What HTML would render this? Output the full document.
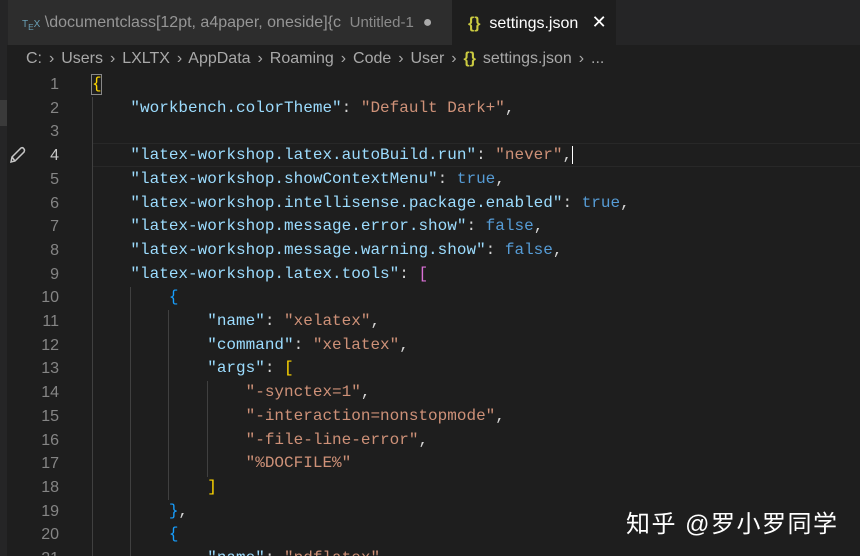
<!DOCTYPE html>
<html><head><meta charset="utf-8"><style>
*{margin:0;padding:0;box-sizing:border-box}
html,body{width:860px;height:556px;overflow:hidden}
body{background:#1e1e1e;position:relative;font-family:"Liberation Sans",sans-serif}
.tabs{position:absolute;left:0;top:0;width:860px;height:45px;background:#252526}
.t1{position:absolute;left:8px;top:0;width:444px;height:45px;background:#2d2d2d;color:#969696;font-size:16px;line-height:45px;padding-left:14px;white-space:nowrap}
.t2{position:absolute;left:452px;top:0;width:164px;height:45px;background:#1e1e1e;color:#fff;font-size:16px;line-height:45px;padding-left:16px;white-space:nowrap}
.bc{position:absolute;left:26px;top:48px;height:22px;color:#a9a9a9;font-size:16px;line-height:22px;white-space:nowrap;word-spacing:2.5px}
.y{color:#cbcb41;font-weight:bold}
.strip{position:absolute;left:0;top:45px;width:7px;height:511px;background:#252526}
.strip2{position:absolute;left:0;top:100px;width:7px;height:26px;background:#3a3a3a}
.code{position:absolute;left:0;top:73px;width:860px;height:483px;overflow:hidden;font-family:"Liberation Mono",monospace;font-size:16px;line-height:23.7px}
.ln{position:absolute;left:0;width:59px;text-align:right;color:#858585;font-family:"Liberation Sans",sans-serif;font-size:16px}
.tx{position:absolute;left:92px;top:0;color:#d4d4d4;white-space:pre}
.k{color:#9cdcfe}.s{color:#ce9178}.b{color:#569cd6}.g{color:#ffd700}.p{color:#da70d6}.bl{color:#179fff}
.cur{position:absolute;left:92px;top:143px;width:768px;height:24px;border-top:1px solid #282828;border-bottom:1px solid #282828}
.guide{position:absolute;width:1px;background:#404040}
.wm{position:absolute;left:626px;top:504px;color:#fff;font-family:"Liberation Sans","Noto Sans CJK SC",sans-serif;font-size:24px;letter-spacing:1.5px;white-space:nowrap}
</style></head><body>
<div class="tabs">
<div class="t1"><span style="font-size:10px;color:#6a9fb5">T<sub>E</sub>X</span> \documentclass[12pt, a4paper, oneside]{c <span style="color:#8a8a8a;font-size:15px">&nbsp;Untitled-1</span> <span style="color:#aaa">&nbsp;●</span></div>
<div class="t2"><span class="y">{}</span>&nbsp; settings.json&nbsp;&nbsp; <span style="font-size:18px">✕</span></div>
</div>
<div class="bc">C: › Users › LXLTX › AppData › Roaming › Code › User › <span class="y">{}</span> settings.json › ...</div>
<div class="strip"></div><div class="strip2"></div>
<div class="cur"></div>
<div class="guide" style="left:92px;top:97px;height:459px"></div>
<div class="guide" style="left:130px;top:287px;height:269px"></div>
<div class="guide" style="left:168px;top:310px;height:190px"></div>
<div class="guide" style="left:207px;top:381px;height:96px"></div>
<svg style="position:absolute;left:8px;top:145px" width="20" height="20" viewBox="0 0 20 20"><path d="M3 17 L4 12 L13 3 Q15 2 16 4 Q17 5 16 7 L7 16 Z M4 12 L7 16" fill="none" stroke="#c5c5c5" stroke-width="1.5"/></svg>
<div style="position:absolute;left:91px;top:74px;width:11px;height:21px;border:1px solid #888"></div>
<div class="code">
<div class="ln" style="top:0">1</div><div class="ln" style="top:23.7px">2</div><div class="ln" style="top:47.4px">3</div><div class="ln" style="top:71.1px;color:#c6c6c6">4</div><div class="ln" style="top:94.8px">5</div><div class="ln" style="top:118.5px">6</div><div class="ln" style="top:142.2px">7</div><div class="ln" style="top:165.9px">8</div><div class="ln" style="top:189.6px">9</div><div class="ln" style="top:213.3px">10</div><div class="ln" style="top:237px">11</div><div class="ln" style="top:260.7px">12</div><div class="ln" style="top:284.4px">13</div><div class="ln" style="top:308.1px">14</div><div class="ln" style="top:331.8px">15</div><div class="ln" style="top:355.5px">16</div><div class="ln" style="top:379.2px">17</div><div class="ln" style="top:402.9px">18</div><div class="ln" style="top:426.6px">19</div><div class="ln" style="top:450.3px">20</div><div class="ln" style="top:474px">21</div>
<div class="tx"><span class="g">{</span>
    <span class="k">"workbench.colorTheme"</span>: <span class="s">"Default Dark+"</span>,

    <span class="k">"latex-workshop.latex.autoBuild.run"</span>: <span class="s">"never"</span>,<span style="border-left:1px solid #fff"></span>
    <span class="k">"latex-workshop.showContextMenu"</span>: <span class="b">true</span>,
    <span class="k">"latex-workshop.intellisense.package.enabled"</span>: <span class="b">true</span>,
    <span class="k">"latex-workshop.message.error.show"</span>: <span class="b">false</span>,
    <span class="k">"latex-workshop.message.warning.show"</span>: <span class="b">false</span>,
    <span class="k">"latex-workshop.latex.tools"</span>: <span class="p">[</span>
        <span class="bl">{</span>
            <span class="k">"name"</span>: <span class="s">"xelatex"</span>,
            <span class="k">"command"</span>: <span class="s">"xelatex"</span>,
            <span class="k">"args"</span>: <span class="g">[</span>
                <span class="s">"-synctex=1"</span>,
                <span class="s">"-interaction=nonstopmode"</span>,
                <span class="s">"-file-line-error"</span>,
                <span class="s">"%DOCFILE%"</span>
            <span class="g">]</span>
        <span class="bl">}</span>,
        <span class="bl">{</span>
            <span class="k">"name"</span>: <span class="s">"pdflatex"</span>,</div>
</div>
<div class="wm">知乎 @罗小罗同学</div>
</body></html>
